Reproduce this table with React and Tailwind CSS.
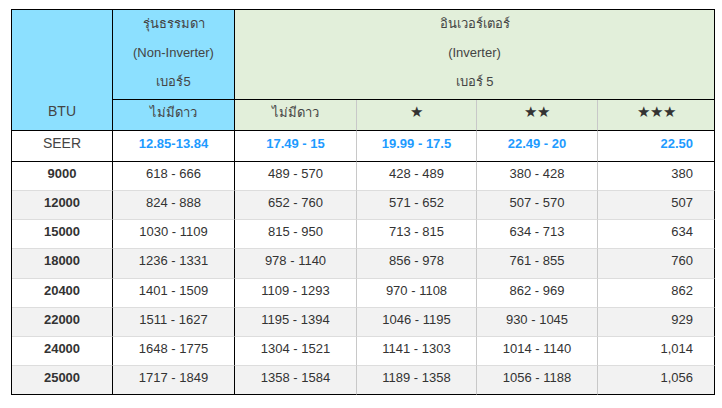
import React from "react";

const rows = [
  ["9000", "618 - 666", "489 - 570", "428 - 489", "380 - 428", "380"],
  ["12000", "824 - 888", "652 - 760", "571 - 652", "507 - 570", "507"],
  ["15000", "1030 - 1109", "815 - 950", "713 - 815", "634 - 713", "634"],
  ["18000", "1236 - 1331", "978 - 1140", "856 - 978", "761 - 855", "760"],
  ["20400", "1401 - 1509", "1109 - 1293", "970 - 1108", "862 - 969", "862"],
  ["22000", "1511 - 1627", "1195 - 1394", "1046 - 1195", "930 - 1045", "929"],
  ["24000", "1648 - 1775", "1304 - 1521", "1141 - 1303", "1014 - 1140", "1,014"],
  ["25000", "1717 - 1849", "1358 - 1584", "1189 - 1358", "1056 - 1188", "1,056"],
];

export default function App() {
  return (
    <div
      className="w-[722px] h-[408px] bg-white pt-[9px] pl-[11px]"
      style={{ fontFamily: '"Liberation Sans", Arial, "Noto Sans", sans-serif' }}
    >
      <table className="table-fixed border-separate border-spacing-0 w-[704px] border-l border-t border-black text-[13px] text-[#333]">
        <colgroup>
          <col className="w-[101px]" />
          <col className="w-[122px]" />
          <col className="w-[122px]" />
          <col className="w-[120px]" />
          <col className="w-[121px]" />
          <col className="w-[117px]" />
        </colgroup>
        <thead>
          <tr className="h-[90px]">
            <td
              rowSpan={2}
              className="bg-[#8ce0ff] border-r border-b border-black align-bottom text-center text-[14px] text-[#444] p-0 pb-[8px]"
            >
              BTU
            </td>
            <td className="bg-[#8ce0ff] border-r border-b border-black align-top text-center text-[#444] p-0">
              <div className="-mt-[1px] leading-[29px]">
                <div>รุ่นธรรมดา</div>
                <div>(Non-Inverter)</div>
                <div>เบอร์5</div>
              </div>
            </td>
            <td
              colSpan={4}
              className="bg-[#e2efda] border-r border-b border-black align-top text-center text-[#444] p-0"
            >
              <div className="-mt-[1px] leading-[29px]">
                <div>อินเวอร์เตอร์</div>
                <div>(Inverter)</div>
                <div>เบอร์ 5</div>
              </div>
            </td>
          </tr>
          <tr className="h-[31px]">
            <td className="bg-[#8ce0ff] border-r border-b border-black align-top text-center text-[#444] pt-[3px]">
              ไม่มีดาว
            </td>
            <td className="bg-[#e2efda] border-r border-b border-r-[#c8c8c8] border-b-black align-top text-center text-[#444] pt-[3px]">
              ไม่มีดาว
            </td>
            <td className="bg-[#e2efda] border-r border-b border-r-[#c8c8c8] border-b-black align-top text-center text-[15px] leading-[17px] text-[#333] pt-[3px]">
              ★
            </td>
            <td className="bg-[#e2efda] border-r border-b border-r-[#c8c8c8] border-b-black align-top text-center text-[15px] leading-[17px] text-[#333] pt-[3px]">
              ★★
            </td>
            <td className="bg-[#e2efda] border-r border-b border-black align-top text-center text-[15px] leading-[17px] text-[#333] pt-[3px]">
              ★★★
            </td>
          </tr>
        </thead>
        <tbody>
          <tr className="h-[31px] bg-white">
            <td className="border-r border-b border-black align-top text-center text-[14px] text-[#444] pt-[2px]">
              SEER
            </td>
            <td className="border-r border-b border-black align-top text-center font-bold text-[#1e9bff] pt-[3px]">
              12.85-13.84
            </td>
            <td className="border-r border-b border-r-[#c8c8c8] border-b-black align-top text-center font-bold text-[#1e9bff] pt-[3px]">
              17.49 - 15
            </td>
            <td className="border-r border-b border-r-[#c8c8c8] border-b-black align-top text-center font-bold text-[#1e9bff] pt-[3px]">
              19.99 - 17.5
            </td>
            <td className="border-r border-b border-r-[#c8c8c8] border-b-black align-top text-center font-bold text-[#1e9bff] pt-[3px]">
              22.49 - 20
            </td>
            <td className="border-r border-b border-black align-top text-right font-bold text-[#1e9bff] pt-[3px] pr-[21px]">
              22.50
            </td>
          </tr>
          {rows.map((r, i) => {
            const last = i === rows.length - 1;
            const bb = last ? "border-b-black" : "border-b-[#dddddd]";
            return (
              <tr
                key={r[0]}
                className={`h-[29.125px] ${i % 2 === 1 ? "bg-[#f2f2f2]" : "bg-white"}`}
              >
                <td className={`border-r border-b border-r-black ${bb} align-top text-center font-bold pt-[2px]`}>
                  {r[0]}
                </td>
                <td className={`border-r border-b border-r-black ${bb} align-top text-center pt-[2px]`}>
                  {r[1]}
                </td>
                <td className={`border-r border-b border-r-[#c8c8c8] ${bb} align-top text-center pt-[2px]`}>
                  {r[2]}
                </td>
                <td className={`border-r border-b border-r-[#c8c8c8] ${bb} align-top text-center pt-[2px]`}>
                  {r[3]}
                </td>
                <td className={`border-r border-b border-r-[#c8c8c8] ${bb} align-top text-center pt-[2px]`}>
                  {r[4]}
                </td>
                <td className={`border-r border-b border-r-black ${bb} align-top text-right pt-[2px] pr-[21px]`}>
                  {r[5]}
                </td>
              </tr>
            );
          })}
        </tbody>
      </table>
    </div>
  );
}
